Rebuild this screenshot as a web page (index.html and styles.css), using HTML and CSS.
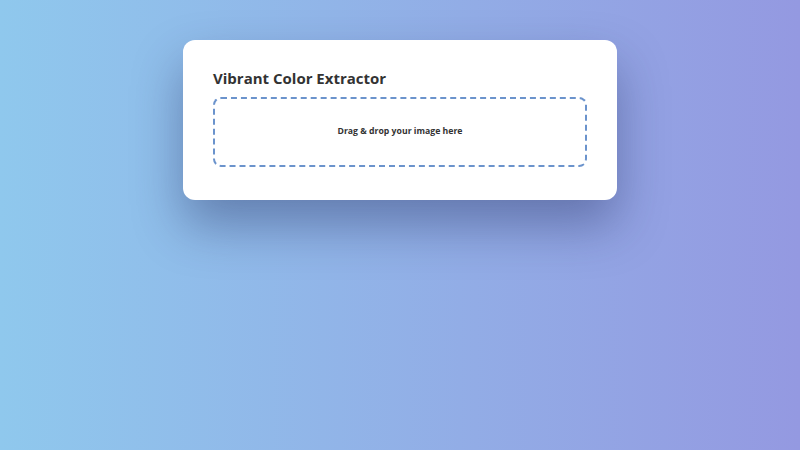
FILE: index.html
```html
<!DOCTYPE html>
<html lang="en">
<head>
  <meta charset="UTF-8">
  <meta name="viewport" content="width=device-width, initial-scale=1.0">
  <title>Vibrant Color Extractor</title>
  <link rel="stylesheet" href="styles.css">
</head>
<body>
  <div class="card">
    <h1 class="title">Vibrant Color Extractor</h1>
    <div class="drop-zone">
      <p>Drag &amp; drop your image here</p>
    </div>
  </div>
</body>
</html>
```

FILE: styles.css
```css
* {
  margin: 0;
  padding: 0;
  box-sizing: border-box;
}

body {
  height: 100vh;
  font-family: "Open Sans", sans-serif;
  color: #333;
  background: linear-gradient(to right, #8fc8ed, #9499e1);
  display: flex;
  justify-content: center;
  align-items: flex-start;
  padding-top: 40px;
}

.card {
  width: 434px;
  background-color: #fff;
  border-radius: 12px;
  padding: 26px 30px 33px;
  box-shadow: 0 25px 50px rgba(30, 40, 90, 0.4);
}

.title {
  font-size: 15px;
  font-weight: 700;
  line-height: 24px;
  margin-bottom: 7px;
}

.drop-zone {
  height: 70px;
  padding-bottom: 2px;
  border: 2px dashed #6b93cc;
  border-radius: 8px;
  display: flex;
  justify-content: center;
  align-items: center;
}

.drop-zone p {
  font-size: 8.7px;
  font-weight: 700;
}
```
